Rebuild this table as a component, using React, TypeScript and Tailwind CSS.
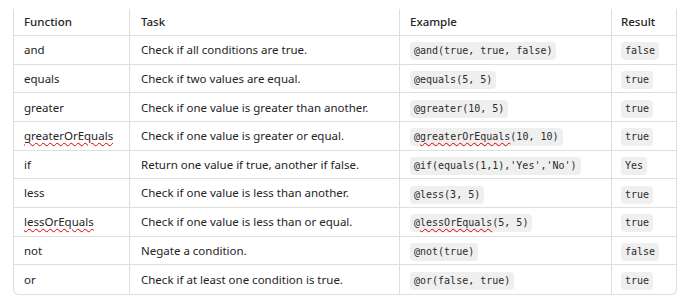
import React from "react";

const rows: { fn: string; task: string; ex: React.ReactNode; res: string; fnErr?: boolean }[] = [
  { fn: "and", task: "Check if all conditions are true.", ex: "@and(true, true, false)", res: "false" },
  { fn: "equals", task: "Check if two values are equal.", ex: "@equals(5, 5)", res: "true" },
  { fn: "greater", task: "Check if one value is greater than another.", ex: "@greater(10, 5)", res: "true" },
  {
    fn: "greaterOrEquals",
    fnErr: true,
    task: "Check if one value is greater or equal.",
    ex: (
      <>
        @<span className="underline decoration-wavy decoration-[#e00000] decoration-1 underline-offset-[2px]">greaterOrEquals</span>(10, 10)
      </>
    ),
    res: "true",
  },
  { fn: "if", task: "Return one value if true, another if false.", ex: "@if(equals(1,1),'Yes','No')", res: "Yes" },
  { fn: "less", task: "Check if one value is less than another.", ex: "@less(3, 5)", res: "true" },
  {
    fn: "lessOrEquals",
    fnErr: true,
    task: "Check if one value is less than or equal.",
    ex: (
      <>
        @<span className="underline decoration-wavy decoration-[#e00000] decoration-1 underline-offset-[2px]">lessOrEquals</span>(5, 5)
      </>
    ),
    res: "true",
  },
  { fn: "not", task: "Negate a condition.", ex: "@not(true)", res: "false" },
  { fn: "or", task: "Check if at least one condition is true.", ex: "@or(false, true)", res: "true" },
];

const grid = "grid grid-cols-[115px_270px_212px_65px]";
const code =
  "inline-block rounded-[4px] bg-[#efefef] px-[4px] h-[18px] leading-[18px] mt-[3px] text-[10px] text-[#2b2b2b] font-['DejaVu_Sans_Mono',monospace]";

export default function App() {
  return (
    <div className="w-[690px] h-[295px] bg-white overflow-hidden font-['Noto_Sans',sans-serif] text-[11.5px] text-[#242424]">
      <div className="ml-[13px] mt-[9px] w-[664px] border-x border-b border-[#dedede] rounded-b-[6px]">
        <div className={`${grid} h-[27px] border-b border-[#dedede] font-medium`}>
          <div className="pl-[10px] flex items-center">Function</div>
          <div className="pl-[11px] flex items-center border-l border-[#dedede]">Task</div>
          <div className="pl-[10px] flex items-center border-l border-[#dedede]">Example</div>
          <div className="pl-[9px] flex items-center border-l border-[#dedede]">Result</div>
        </div>
        {rows.map((r, i) => (
          <div
            key={r.fn}
            className={`${grid} h-[28.67px] ${i < rows.length - 1 ? "border-b border-[#dedede]" : ""}`}
          >
            <div className="pl-[10px] flex items-center">
              {r.fnErr ? (
                <span className="underline decoration-wavy decoration-[#e00000] decoration-1 underline-offset-[2px]">{r.fn}</span>
              ) : (
                r.fn
              )}
            </div>
            <div className="pl-[11px] flex items-center border-l border-[#dedede]">{r.task}</div>
            <div className="pl-[10px] flex items-center border-l border-[#dedede]">
              <span className={code}>{r.ex}</span>
            </div>
            <div className="pl-[9px] flex items-center border-l border-[#dedede]">
              <span className={code}>{r.res}</span>
            </div>
          </div>
        ))}
      </div>
    </div>
  );
}
